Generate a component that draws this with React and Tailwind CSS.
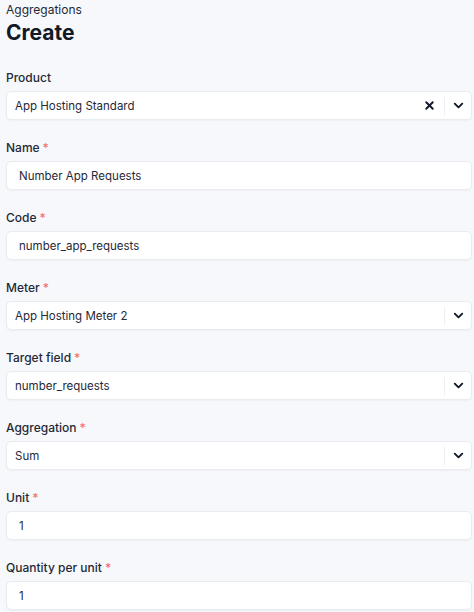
import { X, ChevronDown } from 'lucide-react';

const fields = [
    { label: 'Name', type: 'input', value: 'Number App Requests' },
    { label: 'Code', type: 'input', value: 'number_app_requests' },
    { label: 'Meter', type: 'select', value: 'App Hosting Meter 2' },
    { label: 'Target field', type: 'select', value: 'number_requests' },
    { label: 'Aggregation', type: 'select', value: 'Sum' },
    { label: 'Unit', type: 'input', value: '1' },
    { label: 'Quantity per unit', type: 'input', value: '1' },
];

function Label({ text, required }) {
    return (
        <div className="h-[14px] leading-[14px] text-[12px] font-medium text-[#1f2937] mb-[7px] pt-[1px]">
            {text}
            {required && <span className="text-[#f87171] ml-[3px]">*</span>}
        </div>
    );
}

function Select({ value, clearable }) {
    return (
        <div className="h-[29px] bg-white rounded-[5px] border border-[#e8ecf1] shadow-[0_1px_2px_rgba(0,0,0,0.04)] flex items-center">
            <span className="flex-1 pl-[8px] pt-[2px] text-[11.5px] text-[#1f2937]">{value}</span>
            {clearable && <X size={13} strokeWidth={3.5} className="text-[#111827] mr-[8px]" />}
            <div className="w-px h-[18px] bg-[#eceff3]" />
            <div className="w-[26px] flex items-center justify-center">
                <ChevronDown size={15} strokeWidth={3} className="text-[#111827]" />
            </div>
        </div>
    );
}

function Input({ value }) {
    return (
        <div className="h-[29px] bg-white rounded-[5px] border border-[#e8ecf1] shadow-[0_1px_2px_rgba(0,0,0,0.04)] flex items-center">
            <span className="pl-[12px] pt-[2px] text-[11.5px] text-[#1f2937]">{value}</span>
        </div>
    );
}

export default function App() {
    return (
        <div className="min-h-screen bg-[#f6f8fb] px-[6px] pr-[2px]" style={{ fontFamily: 'Inter, "Noto Sans", sans-serif' }}>
            <div className="h-[18px] pt-[2px] leading-[16px] text-[12px] text-[#1f2937]">Aggregations</div>
            <h1 className="mt-[2px] h-[26px] leading-[26px] text-[21px] font-bold text-[#111827]">Create</h1>

            <div className="mt-[24px]">
                <Label text="Product" />
                <Select value="App Hosting Standard" clearable />
            </div>

            {fields.map((f, i) => (
                <div key={i} className="mt-[20px]">
                    <Label text={f.label} required />
                    {f.type === 'select' ? <Select value={f.value} /> : <Input value={f.value} />}
                </div>
            ))}
        </div>
    );
}
